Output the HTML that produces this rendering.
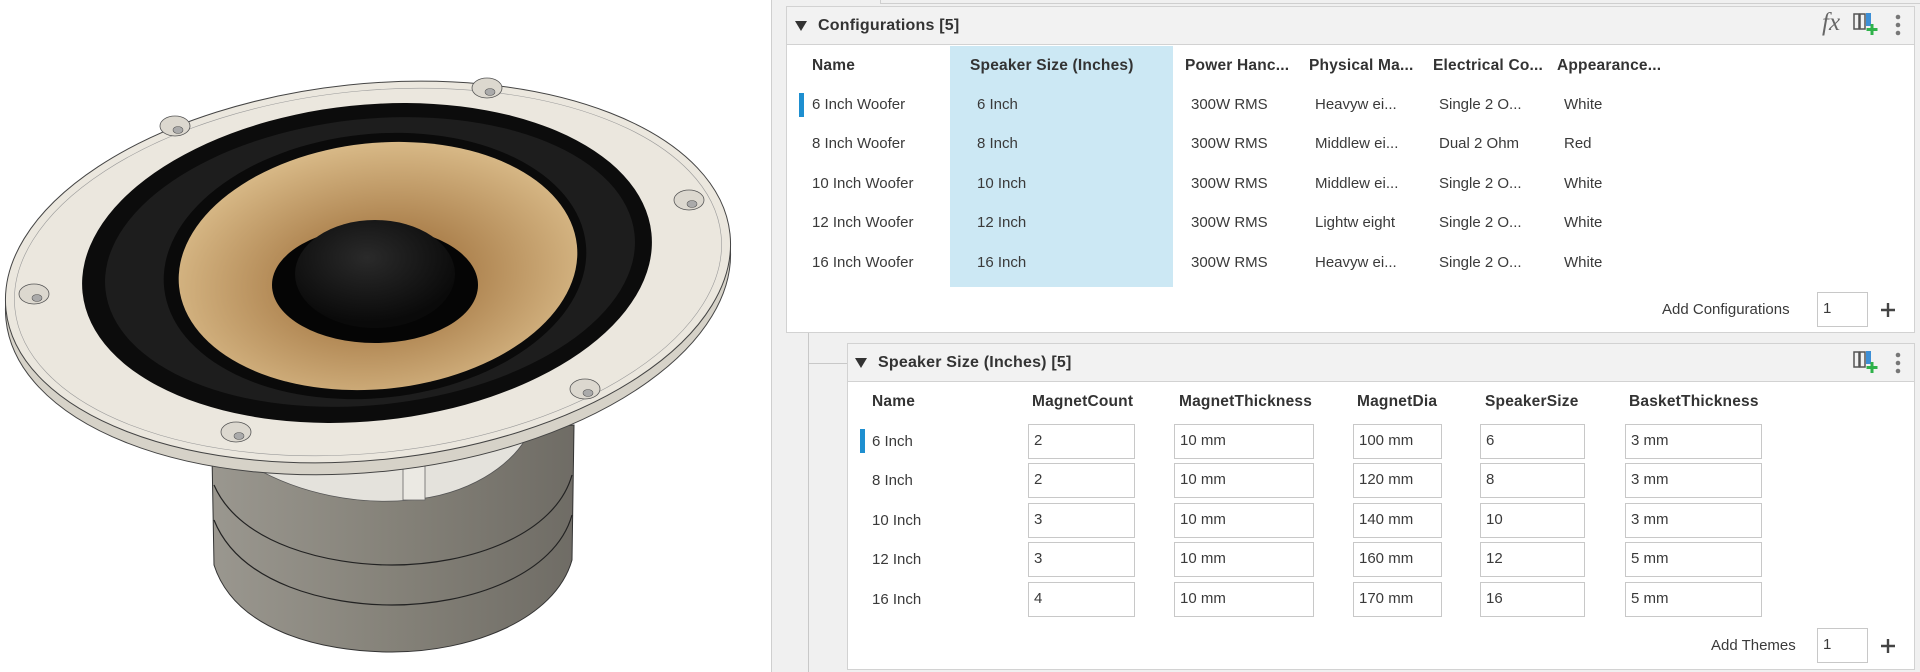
<!DOCTYPE html>
<html><head><meta charset="utf-8"><style>
*{margin:0;padding:0;box-sizing:border-box}
body{width:1920px;height:672px;overflow:hidden;background:#fff;font-family:"Liberation Sans",sans-serif;position:relative;color:#3a3a3a}
.a{position:absolute;white-space:nowrap}
.t{font-size:15px;line-height:18px}
.h{font-size:15.5px;font-weight:bold;color:#333;line-height:18px;letter-spacing:0.2px}
.box{position:absolute;border:1px solid #c8c8c8;background:#fff;height:35px;font-size:15px;line-height:18px;padding:7px 0 0 5px;color:#3a3a3a}
.tri{position:absolute;width:0;height:0;border-left:6px solid transparent;border-right:6px solid transparent;border-top:10px solid #333}
</style></head><body>

<svg class="a" style="left:0;top:0" width="770" height="672" viewBox="0 0 770 672">
<defs>
<linearGradient id="mg" x1="0" x2="1" y1="0" y2="0"><stop offset="0" stop-color="#9a978f"/><stop offset="0.5" stop-color="#858279"/><stop offset="1" stop-color="#6f6c65"/></linearGradient>
<radialGradient id="cone" cx="0.5" cy="0.55" r="0.55"><stop offset="0.3" stop-color="#a87c48"/><stop offset="1" stop-color="#d8b987"/></radialGradient>
<radialGradient id="dome" cx="0.45" cy="0.35" r="0.6"><stop offset="0" stop-color="#2a2a2a"/><stop offset="1" stop-color="#0a0a0a"/></radialGradient>
</defs>
<path d="M212,455 L214,565 C235,630 320,652 392,652 C470,652 555,620 572,560 L574,425 Z" fill="url(#mg)" stroke="#333" stroke-width="1"/>
<path d="M214,520 C240,585 330,605 392,605 C470,605 555,575 572,515" fill="none" stroke="#222" stroke-width="1.2"/>
<path d="M214,485 C240,545 330,565 392,565 C470,565 555,535 572,475" fill="none" stroke="#222" stroke-width="1.2"/>
<path d="M250,465 C300,495 360,505 410,500 C470,495 510,465 525,440 L520,420 L250,440 Z" fill="#e4e2dc" stroke="#555" stroke-width="0.8"/>
<rect x="403" y="460" width="22" height="40" fill="#ebe9e3" stroke="#666" stroke-width="0.8"/>
<ellipse cx="368" cy="282" rx="364" ry="190" transform="rotate(-6 368 282)" fill="#d6d2c8" stroke="#444" stroke-width="1"/>
<ellipse cx="368" cy="272" rx="364" ry="188" transform="rotate(-6 368 272)" fill="#ebe7de" stroke="#444" stroke-width="1"/>
<ellipse cx="368" cy="272" rx="355" ry="181" transform="rotate(-6 368 272)" fill="none" stroke="#999" stroke-width="0.6"/>
<g fill="#dcd8cf" stroke="#555" stroke-width="0.8">
<ellipse cx="175" cy="126" rx="15" ry="10"/><ellipse cx="487" cy="88" rx="15" ry="10"/><ellipse cx="689" cy="200" rx="15" ry="10"/>
<ellipse cx="585" cy="389" rx="15" ry="10"/><ellipse cx="236" cy="432" rx="15" ry="10"/><ellipse cx="34" cy="294" rx="15" ry="10"/>
</g>
<g fill="#aaa" stroke="#555" stroke-width="0.6">
<ellipse cx="178" cy="130" rx="5" ry="3.5"/><ellipse cx="490" cy="92" rx="5" ry="3.5"/><ellipse cx="692" cy="204" rx="5" ry="3.5"/>
<ellipse cx="588" cy="393" rx="5" ry="3.5"/><ellipse cx="239" cy="436" rx="5" ry="3.5"/><ellipse cx="37" cy="298" rx="5" ry="3.5"/>
</g>
<ellipse cx="367" cy="263" rx="286" ry="158" transform="rotate(-6 367 263)" fill="#0c0c0c"/>
<ellipse cx="370" cy="262" rx="266" ry="143" transform="rotate(-6 370 262)" fill="#1d1d1d"/>
<ellipse cx="375" cy="266" rx="212" ry="132" transform="rotate(-6 375 266)" fill="#0a0a0a"/>
<ellipse cx="378" cy="266" rx="200" ry="123" transform="rotate(-6 378 266)" fill="url(#cone)"/>
<ellipse cx="375" cy="285" rx="103" ry="58" fill="#050505"/>
<ellipse cx="375" cy="274" rx="80" ry="54" fill="url(#dome)"/>
</svg>

<div class="a" style="left:771px;top:0;width:1149px;height:672px;background:#f0f0f0;border-left:1px solid #cfcfcf"></div>
<div class="a" style="left:880px;top:0;width:1040px;height:4px;border-bottom:1px solid #cfcfcf;border-left:1px solid #cfcfcf;background:#f0f0f0"></div>
<div class="a" style="left:808px;top:332px;width:1px;height:340px;background:#c8c8c8"></div>
<div class="a" style="left:808px;top:363px;width:39px;height:1px;background:#c8c8c8"></div>

<div class="a" style="left:786px;top:6px;width:1129px;height:327px;background:#fff;border:1px solid #d2d2d2"></div>
<div class="a" style="left:787px;top:7px;width:1127px;height:38px;background:#f2f2f2;border-bottom:1px solid #d2d2d2"></div>
<div class="tri" style="left:795px;top:21px"></div>
<div class="a h" style="left:818px;top:17px;font-size:16px">Configurations [5]</div>
<div class="a" style="left:1822px;top:9px;font-family:'Liberation Serif',serif;font-style:italic;font-size:25px;color:#666">fx</div>
<svg class="a" style="left:1853px;top:12px" width="26" height="24" viewBox="0 0 26 24"><rect x="1" y="2" width="5" height="15" fill="none" stroke="#555" stroke-width="1.5"/><rect x="7" y="2" width="5" height="15" fill="none" stroke="#555" stroke-width="1.5"/><rect x="13" y="1" width="5" height="13" fill="#3d8fd6"/><path d="M19 12v11M13.5 17.5h11" stroke="#2fb24a" stroke-width="3"/></svg>
<svg class="a" style="left:1894px;top:14px" width="8" height="22"><circle cx="4" cy="3" r="2.3" fill="#777"/><circle cx="4" cy="11" r="2.3" fill="#777"/><circle cx="4" cy="19" r="2.3" fill="#777"/></svg>
<div class="a" style="left:950px;top:46px;width:223px;height:241px;background:#cce8f4"></div>
<div class="a" style="left:799px;top:93px;width:5px;height:24px;background:#1e8fd0"></div>
<div class="a h" style="left:812px;top:57px">Name</div>
<div class="a h" style="left:970px;top:57px">Speaker Size (Inches)</div>
<div class="a h" style="left:1185px;top:57px">Power Hanc...</div>
<div class="a h" style="left:1309px;top:57px">Physical Ma...</div>
<div class="a h" style="left:1433px;top:57px">Electrical Co...</div>
<div class="a h" style="left:1557px;top:57px">Appearance...</div>

<div class="a t" style="left:812px;top:96px">6 Inch Woofer</div><div class="a t" style="left:977px;top:96px">6 Inch</div><div class="a t" style="left:1191px;top:96px">300W RMS</div><div class="a t" style="left:1315px;top:96px">Heavyw ei...</div><div class="a t" style="left:1439px;top:96px">Single 2 O...</div><div class="a t" style="left:1564px;top:96px">White</div>
<div class="a t" style="left:812px;top:135px">8 Inch Woofer</div><div class="a t" style="left:977px;top:135px">8 Inch</div><div class="a t" style="left:1191px;top:135px">300W RMS</div><div class="a t" style="left:1315px;top:135px">Middlew ei...</div><div class="a t" style="left:1439px;top:135px">Dual 2 Ohm</div><div class="a t" style="left:1564px;top:135px">Red</div>
<div class="a t" style="left:812px;top:175px">10 Inch Woofer</div><div class="a t" style="left:977px;top:175px">10 Inch</div><div class="a t" style="left:1191px;top:175px">300W RMS</div><div class="a t" style="left:1315px;top:175px">Middlew ei...</div><div class="a t" style="left:1439px;top:175px">Single 2 O...</div><div class="a t" style="left:1564px;top:175px">White</div>
<div class="a t" style="left:812px;top:214px">12 Inch Woofer</div><div class="a t" style="left:977px;top:214px">12 Inch</div><div class="a t" style="left:1191px;top:214px">300W RMS</div><div class="a t" style="left:1315px;top:214px">Lightw eight</div><div class="a t" style="left:1439px;top:214px">Single 2 O...</div><div class="a t" style="left:1564px;top:214px">White</div>
<div class="a t" style="left:812px;top:254px">16 Inch Woofer</div><div class="a t" style="left:977px;top:254px">16 Inch</div><div class="a t" style="left:1191px;top:254px">300W RMS</div><div class="a t" style="left:1315px;top:254px">Heavyw ei...</div><div class="a t" style="left:1439px;top:254px">Single 2 O...</div><div class="a t" style="left:1564px;top:254px">White</div>

<div class="a t" style="left:1662px;top:301px">Add Configurations</div>
<div class="box" style="left:1817px;top:292px;width:51px">1</div>
<svg class="a" style="left:1880px;top:302px" width="16" height="16"><path d="M8 1v14M1 8h14" stroke="#444" stroke-width="2.4"/></svg>

<div class="a" style="left:847px;top:343px;width:1068px;height:327px;background:#fff;border:1px solid #d2d2d2"></div>
<div class="a" style="left:848px;top:344px;width:1066px;height:38px;background:#f2f2f2;border-bottom:1px solid #d2d2d2"></div>
<div class="tri" style="left:855px;top:358px"></div>
<div class="a h" style="left:878px;top:354px;font-size:16px">Speaker Size (Inches) [5]</div>
<svg class="a" style="left:1853px;top:350px" width="26" height="24" viewBox="0 0 26 24"><rect x="1" y="2" width="5" height="15" fill="none" stroke="#555" stroke-width="1.5"/><rect x="7" y="2" width="5" height="15" fill="none" stroke="#555" stroke-width="1.5"/><rect x="13" y="1" width="5" height="13" fill="#3d8fd6"/><path d="M19 12v11M13.5 17.5h11" stroke="#2fb24a" stroke-width="3"/></svg>
<svg class="a" style="left:1894px;top:352px" width="8" height="22"><circle cx="4" cy="3" r="2.3" fill="#777"/><circle cx="4" cy="11" r="2.3" fill="#777"/><circle cx="4" cy="19" r="2.3" fill="#777"/></svg>
<div class="a" style="left:860px;top:429px;width:5px;height:24px;background:#1e8fd0"></div>
<div class="a h" style="left:872px;top:393px">Name</div>
<div class="a h" style="left:1032px;top:393px">MagnetCount</div>
<div class="a h" style="left:1179px;top:393px">MagnetThickness</div>
<div class="a h" style="left:1357px;top:393px">MagnetDia</div>
<div class="a h" style="left:1485px;top:393px">SpeakerSize</div>
<div class="a h" style="left:1629px;top:393px">BasketThickness</div>

<div class="a t" style="left:872px;top:433px">6 Inch</div>
<div class="a t" style="left:872px;top:472px">8 Inch</div>
<div class="a t" style="left:872px;top:512px">10 Inch</div>
<div class="a t" style="left:872px;top:551px">12 Inch</div>
<div class="a t" style="left:872px;top:591px">16 Inch</div>

<div class="box" style="left:1028px;top:424px;width:107px">2</div><div class="box" style="left:1174px;top:424px;width:140px">10 mm</div><div class="box" style="left:1353px;top:424px;width:89px">100 mm</div><div class="box" style="left:1480px;top:424px;width:105px">6</div><div class="box" style="left:1625px;top:424px;width:137px">3 mm</div>
<div class="box" style="left:1028px;top:463px;width:107px">2</div><div class="box" style="left:1174px;top:463px;width:140px">10 mm</div><div class="box" style="left:1353px;top:463px;width:89px">120 mm</div><div class="box" style="left:1480px;top:463px;width:105px">8</div><div class="box" style="left:1625px;top:463px;width:137px">3 mm</div>
<div class="box" style="left:1028px;top:503px;width:107px">3</div><div class="box" style="left:1174px;top:503px;width:140px">10 mm</div><div class="box" style="left:1353px;top:503px;width:89px">140 mm</div><div class="box" style="left:1480px;top:503px;width:105px">10</div><div class="box" style="left:1625px;top:503px;width:137px">3 mm</div>
<div class="box" style="left:1028px;top:542px;width:107px">3</div><div class="box" style="left:1174px;top:542px;width:140px">10 mm</div><div class="box" style="left:1353px;top:542px;width:89px">160 mm</div><div class="box" style="left:1480px;top:542px;width:105px">12</div><div class="box" style="left:1625px;top:542px;width:137px">5 mm</div>
<div class="box" style="left:1028px;top:582px;width:107px">4</div><div class="box" style="left:1174px;top:582px;width:140px">10 mm</div><div class="box" style="left:1353px;top:582px;width:89px">170 mm</div><div class="box" style="left:1480px;top:582px;width:105px">16</div><div class="box" style="left:1625px;top:582px;width:137px">5 mm</div>

<div class="a t" style="left:1711px;top:637px">Add Themes</div>
<div class="box" style="left:1817px;top:628px;width:51px">1</div>
<svg class="a" style="left:1880px;top:638px" width="16" height="16"><path d="M8 1v14M1 8h14" stroke="#444" stroke-width="2.4"/></svg>
</body></html>
